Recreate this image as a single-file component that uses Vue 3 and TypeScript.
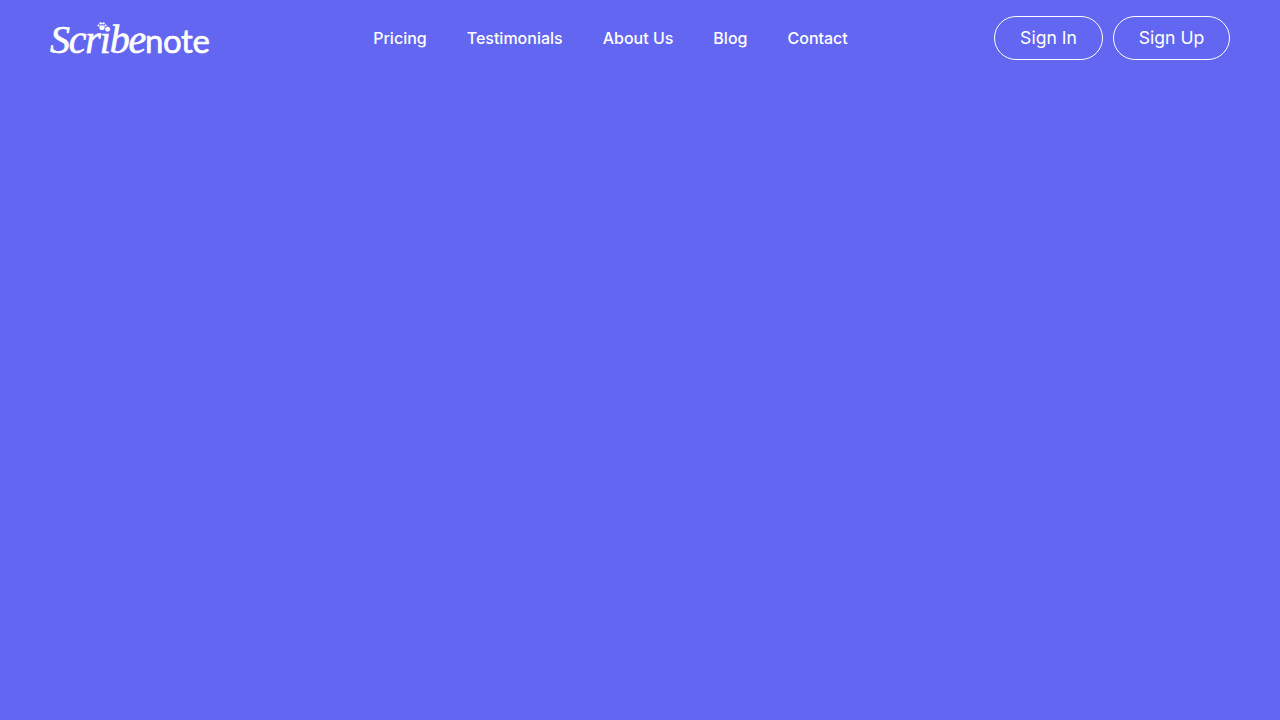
<script setup lang="ts">
const links: string[] = ['Pricing', 'Testimonials', 'About Us', 'Blog', 'Contact']
</script>

<template>
  <div class="page">
    <header class="header">
      <a class="logo" href="#" aria-label="Scribenote">
        <span class="script">Scribe</span><span class="plain">note</span>
        <svg class="paw" viewBox="0 0 12 12" aria-hidden="true">
          <ellipse cx="6" cy="8" rx="3.2" ry="2.8" />
          <circle cx="1.8" cy="5.4" r="1.3" />
          <circle cx="4.4" cy="2.8" r="1.4" />
          <circle cx="7.8" cy="2.8" r="1.4" />
          <circle cx="10.3" cy="5.4" r="1.3" />
        </svg>
      </a>
      <nav class="nav">
        <a v-for="link in links" :key="link" href="#" class="nav-link">{{ link }}</a>
      </nav>
      <div class="actions">
        <button class="btn btn-in" type="button">Sign In</button>
        <button class="btn btn-up" type="button">Sign Up</button>
      </div>
    </header>
  </div>
</template>

<style>
html,
body {
  margin: 0;
  background: #6366f1;
}
</style>

<style scoped>
.page {
  min-height: 720px;
  background: #6366f1;
  font-family: Inter, "Liberation Sans", sans-serif;
  color: #fff;
}
.header {
  display: flex;
  align-items: center;
  justify-content: space-between;
  padding: 16px 50px;
}
.logo {
  position: relative;
  display: flex;
  align-items: baseline;
  width: 177px;
  height: 44px;
  color: #fff;
  text-decoration: none;
  white-space: nowrap;
  line-height: 48px;
}
.script {
  font-family: "Liberation Serif", serif;
  font-style: italic;
  font-size: 40px;
  letter-spacing: -1.2px;
  -webkit-text-stroke: 0.6px #fff;
}
.plain {
  font-family: Lato, sans-serif;
  font-size: 33px;
  letter-spacing: -0.4px;
  -webkit-text-stroke: 0.6px #fff;
}
.paw {
  position: absolute;
  left: 47px;
  top: 5px;
  width: 10px;
  height: 10px;
  fill: #fff;
}
.nav {
  display: flex;
  align-items: center;
  gap: 40px;
}
.nav-link {
  color: #fff;
  font-size: 16px;
  font-weight: 500;
  line-height: 24px;
  text-decoration: none;
}
.actions {
  display: flex;
  gap: 10px;
}
.btn {
  height: 44px;
  padding: 0 0 1px;
  border: 1px solid #fff;
  border-radius: 22px;
  background: transparent;
  color: #fff;
  font-family: inherit;
  font-size: 17.6px;
  font-weight: 400;
  line-height: 20px;
}
.btn-in {
  width: 109px;
}
.btn-up {
  width: 117px;
}
</style>
